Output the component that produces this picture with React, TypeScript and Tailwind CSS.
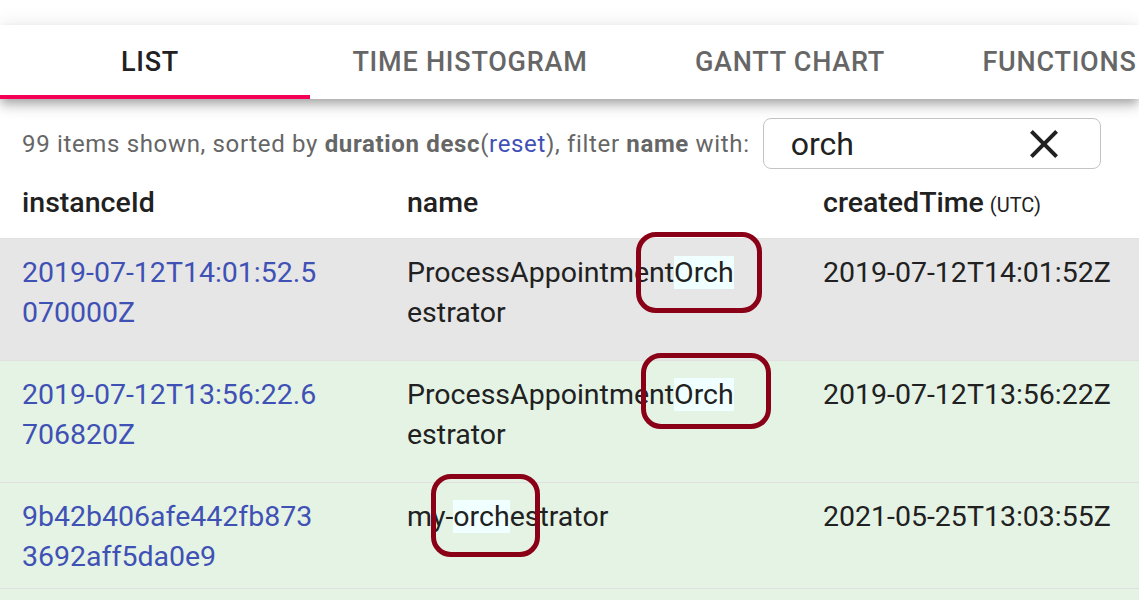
import React from "react";

const tabs = ["List", "Time Histogram", "Gantt Chart", "Functions Graph"];

const rows = [
  {
    id: "2019-07-12T14:01:52.5070000Z",
    pre: "ProcessAppointment",
    hit: "Orch",
    post: "estrator",
    created: "2019-07-12T14:01:52Z",
    bg: "bg-[#e6e6e6]",
    h: "h-[122px]",
  },
  {
    id: "2019-07-12T13:56:22.6706820Z",
    pre: "ProcessAppointment",
    hit: "Orch",
    post: "estrator",
    created: "2019-07-12T13:56:22Z",
    bg: "bg-[#e5f3e5]",
    h: "h-[122px]",
  },
  {
    id: "9b42b406afe442fb8733692aff5da0e9",
    pre: "my-",
    hit: "orch",
    post: "estrator",
    created: "2021-05-25T13:03:55Z",
    bg: "bg-[#e5f3e5]",
    h: "h-[106px]",
  },
];

export default function App() {
  return (
    <div className="relative w-[1139px] h-[600px] overflow-hidden bg-white font-[Roboto,sans-serif]">
      <div className="h-[25px]" />

      {/* Tabs */}
      <div className="relative z-10 h-[74px] bg-white shadow-[0_4px_8px_-2px_rgba(0,0,0,0.2),0_8px_10px_0_rgba(0,0,0,0.14),0_2px_20px_0_rgba(0,0,0,0.12)]">
        <div className="flex h-full -ml-[10px]">
          {tabs.map((t, i) => (
            <div
              key={t}
              className={`relative w-[320px] shrink-0 flex items-center justify-center whitespace-nowrap text-[27px] font-medium uppercase tracking-[0.77px] ${
                i === 0 ? "text-[#212121]" : "text-[#666666]"
              }`}
            >
              {t}
              {i === 0 && <div className="absolute bottom-0 left-0 right-0 h-[4px] bg-[#f50057]" />}
            </div>
          ))}
        </div>
      </div>

      {/* Filter line */}
      <div className="flex items-center pt-[19px] pl-[22px]">
        <span className="whitespace-nowrap text-[24px] tracking-[0.66px] text-[#666666]">
          99 items shown, sorted by <b className="font-bold">duration desc</b>(
          <span className="text-[#3f51b5]">reset</span>), filter <b className="font-bold">name</b> with:
        </span>
        <div className="ml-[13px] flex items-center h-[51px] w-[338px] shrink-0 rounded-[8px] border border-[#c4c4c4] pl-[27px] pr-[32px]">
          <span className="flex-1 text-[32px] text-[#212121]">orch</span>
          <svg width="48" height="48" viewBox="0 0 24 24" className="fill-[#212121]">
            <path d="M19 6.41 17.59 5 12 10.59 6.41 5 5 6.41 10.59 12 5 17.59 6.41 19 12 13.41 17.59 19 19 17.59 13.41 12z" />
          </svg>
        </div>
      </div>

      {/* Header */}
      <div className="grid grid-cols-[385px_416px_1fr] h-[70px] border-b border-[#e0e0e0] text-[28.5px] leading-[40px] font-medium text-[#212121]">
        <div className="pl-[22px] pt-[14px]">instanceId</div>
        <div className="pl-[22px] pt-[14px]">name</div>
        <div className="pl-[22px] pt-[14px] whitespace-nowrap">
          createdTime<span className="ml-[6px] text-[20px] font-normal">(UTC)</span>
        </div>
      </div>

      {/* Rows */}
      {rows.map((r) => (
        <div
          key={r.id}
          className={`grid grid-cols-[385px_416px_1fr] ${r.h} ${r.bg} border-b border-[#e0e0e0] text-[28.5px] leading-[40px] text-[#212121]`}
        >
          <div className="pl-[22px] pt-[14px]">
            <div className="w-[298px] break-all text-[#3f51b5]">{r.id}</div>
          </div>
          <div className="pl-[22px] pt-[14px]">
            <div className="w-[335px] break-all">
              {r.pre}
              <span className="bg-[#f0ffff]">{r.hit}</span>
              {r.post}
            </div>
          </div>
          <div className="pl-[22px] pt-[14px] whitespace-nowrap">{r.created}</div>
        </div>
      ))}
      <div className="h-[20px] bg-[#e5f3e5]" />

      {/* Annotation marks */}
      <div className="absolute left-[636px] top-[232px] w-[126px] h-[81px] rounded-[20px] border-[5px] border-[#8a0017]" />
      <div className="absolute left-[641px] top-[353px] w-[130px] h-[76px] rounded-[20px] border-[5px] border-[#8a0017]" />
      <div className="absolute left-[431px] top-[474px] w-[109px] h-[83px] rounded-[20px] border-[5px] border-[#8a0017]" />
    </div>
  );
}
